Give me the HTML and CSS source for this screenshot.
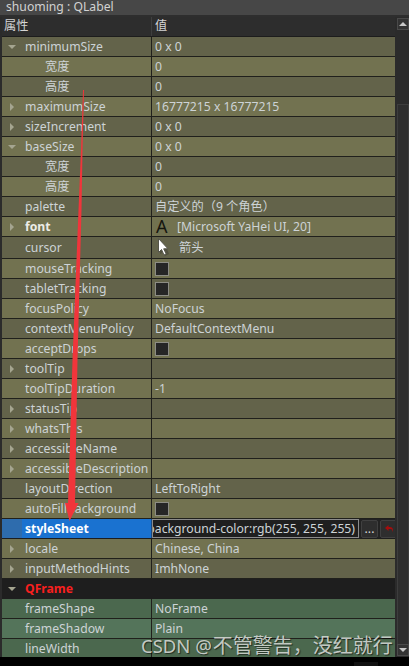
FILE: index.html
```html
<!DOCTYPE html>
<html lang="zh">
<head>
<meta charset="utf-8">
<title>shuoming : QLabel</title>
<link rel="stylesheet" href="styles.css">
</head>
<body>
<div class="app">
  <div class="title">shuoming : QLabel</div>
  <div class="main">
    <div class="tree">
      <div class="head"><div class="hc">属性</div><div class="hc">值</div></div>

      <div class="row dark"><div class="k"><i class="arrow down"></i>minimumSize</div><div class="v">0 x 0</div></div>
      <div class="row light"><div class="k sub">宽度</div><div class="v">0</div></div>
      <div class="row dark"><div class="k sub">高度</div><div class="v">0</div></div>
      <div class="row light"><div class="k"><i class="arrow"></i>maximumSize</div><div class="v">16777215 x 16777215</div></div>
      <div class="row dark"><div class="k"><i class="arrow"></i>sizeIncrement</div><div class="v">0 x 0</div></div>
      <div class="row light"><div class="k"><i class="arrow down"></i>baseSize</div><div class="v">0 x 0</div></div>
      <div class="row dark"><div class="k sub">宽度</div><div class="v">0</div></div>
      <div class="row light"><div class="k sub">高度</div><div class="v">0</div></div>
      <div class="row dark"><div class="k"><i class="arrow none"></i>palette</div><div class="v">自定义的（9 个角色）</div></div>
      <div class="row light"><div class="k strong"><i class="arrow"></i>font</div><div class="v"><span class="fontA">A</span>[Microsoft YaHei UI, 20]</div></div>
      <div class="row dark tall"><div class="k"><i class="arrow none"></i>cursor</div><div class="v">
        <svg class="cur" width="14" height="19" viewBox="0 0 14 19"><path d="M3 4.500 10 11 12 16 8 18 6 14.500 3 16z" fill="#3b3b30" opacity=".45"/><path d="M1.500 .5v14l3-3 2.500 5.500 2.200-1-2.500-5.200h4.300z" fill="#fff" stroke="#55554a" stroke-width="1"/></svg>箭头</div></div>
      <div class="row light"><div class="k"><i class="arrow none"></i>mouseTracking</div><div class="v"><span class="check"></span></div></div>
      <div class="row dark"><div class="k"><i class="arrow none"></i>tabletTracking</div><div class="v"><span class="check"></span></div></div>
      <div class="row light"><div class="k"><i class="arrow none"></i>focusPolicy</div><div class="v">NoFocus</div></div>
      <div class="row dark"><div class="k"><i class="arrow none"></i>contextMenuPolicy</div><div class="v">DefaultContextMenu</div></div>
      <div class="row light"><div class="k"><i class="arrow none"></i>acceptDrops</div><div class="v"><span class="check"></span></div></div>
      <div class="row dark"><div class="k"><i class="arrow"></i>toolTip</div><div class="v"></div></div>
      <div class="row light"><div class="k"><i class="arrow none"></i>toolTipDuration</div><div class="v">-1</div></div>
      <div class="row dark"><div class="k"><i class="arrow"></i>statusTip</div><div class="v"></div></div>
      <div class="row light"><div class="k"><i class="arrow"></i>whatsThis</div><div class="v"></div></div>
      <div class="row dark"><div class="k"><i class="arrow"></i>accessibleName</div><div class="v"></div></div>
      <div class="row light"><div class="k"><i class="arrow"></i>accessibleDescription</div><div class="v"></div></div>
      <div class="row dark"><div class="k"><i class="arrow none"></i>layoutDirection</div><div class="v">LeftToRight</div></div>
      <div class="row light"><div class="k"><i class="arrow none"></i>autoFillBackground</div><div class="v"><span class="check"></span></div></div>
      <div class="row selected">
        <div class="k strong"><i class="arrow none"></i>styleSheet</div>
        <div class="v editor">
          <div class="input"><span>background-color:rgb(255, 255, 255)</span></div>
          <div class="tool">...</div>
          <div class="tool">
            <svg width="10" height="10" viewBox="0 0 10 10"><path d="M4.500 1 1 4l3.500 3V5h1.500c1.500 0 2.500.8 2.500 2.500v1C9.500 6 9 3 6 3H4.500z" fill="#a50d0d"/></svg>
          </div>
        </div>
      </div>
      <div class="row light"><div class="k"><i class="arrow"></i>locale</div><div class="v">Chinese, China</div></div>
      <div class="row dark"><div class="k"><i class="arrow"></i>inputMethodHints</div><div class="v">ImhNone</div></div>
      <div class="row group"><div class="k strong"><i class="arrow down"></i>QFrame</div></div>
      <div class="row gdark"><div class="k"><i class="arrow none"></i>frameShape</div><div class="v">NoFrame</div></div>
      <div class="row glight"><div class="k"><i class="arrow none"></i>frameShadow</div><div class="v">Plain</div></div>
      <div class="row gdark"><div class="k"><i class="arrow none"></i>lineWidth</div><div class="v"></div></div>
    </div>
    <div class="scroll">
      <div class="sbtn"><i class="tri up"></i></div>
      <div class="track"></div>
      <div class="thumb"></div>
      <div class="sbtn"><i class="tri dn"></i></div>
    </div>
  </div>
</div>
<svg class="arrow-mark" width="409" height="666" viewBox="0 0 409 666">
  <polygon points="83,90 84,90 82.500,150 81.500,210 77.500,360 75,503 78.500,503 69.500,521 65,503 68,503 72.500,360 78.500,210 81,150" fill="#f0353b"/>
</svg>
<div class="watermark"><span class="wm-latin">CSDN @</span>不管警告，没红就行</div>
<div class="corner"></div>
</body>
</html>
```
FILE: styles.css
```css
* { box-sizing: border-box; }
html, body { margin: 0; padding: 0; background: #000; }
body {
  width: 409px;
  height: 666px;
  overflow: hidden;
  position: relative;
  font-family: "Noto Sans", "Noto Sans CJK SC", sans-serif;
  font-size: 12.2px;
  color: #cdd3d6;
}
.app { display: flex; flex-direction: column; height: 657px; background: #2b2b2b; }
.title {
  height: 17px;
  padding-left: 6px;
  line-height: 14px;
  background: #474747;
  border-bottom: 2px solid #2e2e2e;
  color: #d2d2d2;
  flex: none;
}
.main { display: flex; flex: 1; min-height: 0; }
.tree { flex: none; width: 396px; padding-left: 2px; background: #2b2b2b; overflow: hidden; }
.head {
  display: grid;
  grid-template-columns: 150px 1fr;
  height: 20px;
  background: #2d2d2d;
  border-bottom: 1px solid #1c1c1c;
  color: #d5d5d5;
  margin-right: 1px;
}
.hc { line-height: 18px; padding-left: 2px; border-right: 1px solid #3f3f3f; }
.hc + .hc { border-right: none; padding-left: 3px; }
.row {
  display: grid;
  grid-template-columns: 150px 1fr;
  height: 20px;
  border-bottom: 1px solid #20201c;
  margin-right: 1px;
}
.row.tall { height: 22px; }
.dark { background: #63634a; }
.light { background: #727250; }
.gdark { background: #4b684e; }
.glight { background: #54745a; }
.k {
  display: flex;
  align-items: center;
  white-space: nowrap;
  border-right: 1px solid #20201c;
  line-height: 19px;
  overflow: hidden;
}
.sub { padding-left: 43px; }
.v {
  display: flex;
  align-items: center;
  padding-left: 3px;
  white-space: nowrap;
  line-height: 19px;
  overflow: hidden;
}
.strong { font-weight: 700; color: #ecece6; }
.arrow {
  flex: none;
  width: 0;
  height: 0;
  margin: 0 11px 0 8px;
  border-style: solid;
  border-width: 4px 0 4px 4px;
  border-color: transparent transparent transparent #a5a590;
}
.arrow.down {
  margin: 0 9px 0 6px;
  border-width: 4px 4px 0 4px;
  border-color: #a5a590 transparent transparent transparent;
}
.arrow.none { border-color: transparent; }
.check {
  display: block;
  width: 14px;
  height: 14px;
  background: #262626;
  border: 1px solid #8c8c84;
}
.fontA {
  font-size: 18px;
  line-height: 19px;
  color: #16160f;
  width: 22px;
  flex: none;
  font-weight: 400;
  padding-left: 1px;
}
.cur { margin: 0 8px 0 2px; flex: none; }
.selected { background: #1a72d0; border-bottom-color: #1e1e1e; }
.selected .k { background: linear-gradient(to right, #2e6cad 20px, #1a72d0 20px); color: #fff; border-right-color: #1a4a80; }
.editor { padding: 0; gap: 2px; background: #232323; overflow: hidden; }
.input {
  display: flex;
  justify-content: flex-end;
  width: 207px;
  height: 19px;
  flex: none;
  overflow: hidden;
  background: #1f1f1f;
  border: 1px solid #8b8b8b;
  padding-right: 3px;
  line-height: 17px;
}
.input span { flex: none; }
.tool {
  width: 17px;
  height: 18px;
  flex: none;
  display: flex;
  align-items: center;
  justify-content: center;
  background: #2e2e2e;
  border: 1px solid #404040;
  border-radius: 2px;
  line-height: 14px;
  color: #d8d8d8;
}
.group { background: #1e1e1e; grid-template-columns: 1fr; border-bottom-color: #1e1e1e; }
.group .k { color: #f8201f; border-right: none; }
.scroll {
  flex: 1;
  display: flex;
  flex-direction: column;
  background: #2b2b2b;
  padding: 1px 0 1px 1px;
}
.sbtn {
  flex: none;
  width: 12px;
  height: 12px;
  display: flex;
  align-items: center;
  justify-content: center;
  background: #333;
  border: 1px solid #4a4a4a;
}
.track { flex: none; height: 74px; }
.thumb { flex: 1; width: 12px; background: #2e2e2e; border: 1px solid #3d3d3d; border-bottom: none; }
.tri { width: 0; height: 0; border-style: solid; }
.tri.up { border-width: 0 4px 4px 4px; border-color: transparent transparent #c8c8c8 transparent; }
.tri.dn { border-width: 4px 4px 0 4px; border-color: #c8c8c8 transparent transparent transparent; }
.arrow-mark { position: absolute; left: 0; top: 0; pointer-events: none; }
.watermark {
  position: absolute;
  left: 141px;
  top: 633px;
  white-space: nowrap;
  font-size: 20px;
  line-height: 26px;
  color: rgba(214, 218, 214, 0.9);
  text-shadow: 1px 1px 1px rgba(0, 0, 0, 0.55);
}
.wm-latin { font-size: 18.500px; margin-right: 1px; }
.corner { position: absolute; left: 354px; top: 662px; width: 24px; height: 4px; background: #101010; }
```
